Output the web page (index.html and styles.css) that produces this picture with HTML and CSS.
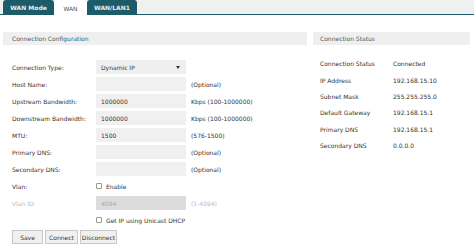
FILE: index.html
```html
<!DOCTYPE html>
<html>
<head>
<meta charset="utf-8">
<link rel="stylesheet" href="styles.css">
</head>
<body>
<div class="tabbar">
  <div class="tab dark">WAN Mode</div>
  <div class="tab active">WAN</div>
  <div class="tab dark">WAN/LAN1</div>
  <div class="tabfill"></div>
</div>
<div class="main">
  <div class="panel left">
    <div class="phead">Connection Configuration</div>
    <div class="form">
      <div class="row"><span class="lbl">Connection Type:</span><span class="inp sel">Dynamic IP<span class="arrow"></span></span></div>
      <div class="row"><span class="lbl">Host Name:</span><span class="inp"></span><span class="hint">(Optional)</span></div>
      <div class="row"><span class="lbl">Upstream Bandwidth:</span><span class="inp">1000000</span><span class="hint">Kbps (100-1000000)</span></div>
      <div class="row"><span class="lbl">Downstream Bandwidth:</span><span class="inp">1000000</span><span class="hint">Kbps (100-1000000)</span></div>
      <div class="row"><span class="lbl">MTU:</span><span class="inp">1500</span><span class="hint">(576-1500)</span></div>
      <div class="row"><span class="lbl">Primary DNS:</span><span class="inp"></span><span class="hint">(Optional)</span></div>
      <div class="row"><span class="lbl">Secondary DNS:</span><span class="inp"></span><span class="hint">(Optional)</span></div>
      <div class="row"><span class="lbl">Vlan:</span><span class="chk"></span><span class="chktext">Enable</span></div>
      <div class="row dis"><span class="lbl">Vlan ID:</span><span class="inp">4094</span><span class="hint">(1-4094)</span></div>
      <div class="row"><span class="lbl"></span><span class="chk"></span><span class="chktext">Get IP using Unicast DHCP</span></div>
      <div class="btns"><span class="btn w31">Save</span><span class="btn w33">Connect</span><span class="btn w37">Disconnect</span></div>
    </div>
  </div>
  <div class="panel right">
    <div class="phead">Connection Status</div>
    <div class="status">
      <div class="srow"><span class="slbl">Connection Status</span><span>Connected</span></div>
      <div class="srow"><span class="slbl">IP Address</span><span>192.168.15.10</span></div>
      <div class="srow"><span class="slbl">Subnet Mask</span><span>255.255.255.0</span></div>
      <div class="srow"><span class="slbl">Default Gateway</span><span>192.168.15.1</span></div>
      <div class="srow"><span class="slbl">Primary DNS</span><span>192.168.15.1</span></div>
      <div class="srow"><span class="slbl">Secondary DNS</span><span>0.0.0.0</span></div>
    </div>
  </div>
</div>
</body>
</html>
```
FILE: styles.css
```css
* { box-sizing: border-box; }
body {
  margin: 0;
  background: #fff;
  font-family: "DejaVu Sans", Verdana, sans-serif;
  font-size: 6px;
  color: #333;
  width: 474px;
  height: 250px;
  overflow: hidden;
}
.tabbar {
  display: flex;
  height: 15px;
  background: #f0f0f0;
  padding-left: 3px;
  border-bottom: 1px solid #1c5b68;
}
.tab {
  height: 15px;
  display: flex;
  align-items: center;
  justify-content: center;
  border-radius: 3px 3px 0 0;
  font-weight: bold;
}
.tab.dark {
  background: #1c5b68;
  color: #e8f0f2;
  width: 51px;
}
.tab.active {
  background: #fff;
  color: #555;
  width: 33px;
  font-weight: normal;
  height: 16px;
  margin-bottom: -1px;
}
.tab:nth-child(3) { width: 50px; }
.tabfill { flex: 1; }
.main {
  display: flex;
  gap: 6px;
  padding: 17px 4px 0 3px;
}
.panel.left { width: 304px; }
.panel.right { flex: 1; }
.phead {
  height: 13px;
  background: #efefef;
  color: #3d6466;
  display: flex;
  align-items: center;
  padding-left: 9px;
}
.right .phead { padding-left: 7px; }
.form {
  padding: 15px 0 0 9px;
  display: flex;
  flex-direction: column;
  gap: 3px;
}
.row {
  display: flex;
  align-items: center;
  height: 14px;
}
.lbl {
  width: 84px;
  flex: none;
}
.inp {
  width: 90px;
  height: 14px;
  background: #f0f0f0;
  display: flex;
  align-items: center;
  padding-left: 5px;
  position: relative;
  flex: none;
}
.sel { background: #efefef; }
.arrow {
  position: absolute;
  right: 6px;
  top: 6px;
  border-left: 2px solid transparent;
  border-right: 2px solid transparent;
  border-top: 3px solid #333;
}
.hint { margin-left: 5px; }
.dis { color: #bbb; }
.dis .inp { background: #dcdcdc; color: #a8a8a8; }
.chk {
  width: 6px;
  height: 6px;
  border: 1px solid #999;
  background: #fff;
  border-radius: 1px;
  flex: none;
}
.chktext { margin-left: 4px; }
.btns {
  display: flex;
  gap: 2px;
}
.btn {
  height: 14px;
  display: flex;
  align-items: center;
  justify-content: center;
  background: #f0f0f0;
  border: 1px solid #c8c8c8;
}
.w31 { width: 31px; }
.w33 { width: 33px; }
.w37 { width: 37px; }
.status {
  padding: 13px 0 0 7px;
  display: flex;
  flex-direction: column;
  gap: 5px;
}
.srow {
  display: flex;
  height: 11.4px;
  align-items: center;
}
.slbl { width: 73px; flex: none; }
```
